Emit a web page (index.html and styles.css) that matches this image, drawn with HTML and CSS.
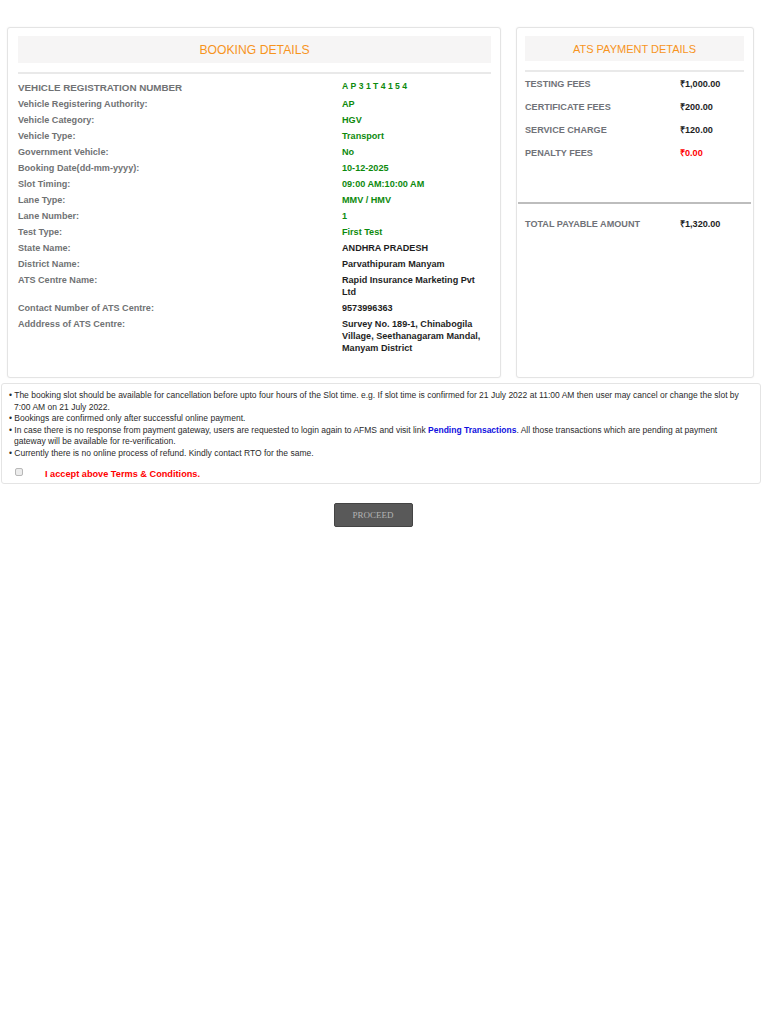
FILE: index.html
```html
<!DOCTYPE html>
<html>
<head>
<meta charset="utf-8">
<link rel="stylesheet" href="styles.css">
</head>
<body>
<div class="page">
  <div class="panels">
    <div class="panel booking">
      <div class="panel-head head-lg">BOOKING DETAILS</div>
      <div class="sep"></div>
      <div class="rows">
        <div class="row first"><div class="lbl lbl-caps">VEHICLE REGISTRATION NUMBER</div><div class="val green spaced">AP31T4154</div></div>
        <div class="row"><div class="lbl">Vehicle Registering Authority:</div><div class="val green">AP</div></div>
        <div class="row"><div class="lbl">Vehicle Category:</div><div class="val green">HGV</div></div>
        <div class="row"><div class="lbl">Vehicle Type:</div><div class="val green">Transport</div></div>
        <div class="row"><div class="lbl">Government Vehicle:</div><div class="val green">No</div></div>
        <div class="row"><div class="lbl">Booking Date(dd-mm-yyyy):</div><div class="val green">10-12-2025</div></div>
        <div class="row"><div class="lbl">Slot Timing:</div><div class="val green">09:00 AM:10:00 AM</div></div>
        <div class="row"><div class="lbl">Lane Type:</div><div class="val green">MMV / HMV</div></div>
        <div class="row"><div class="lbl">Lane Number:</div><div class="val green">1</div></div>
        <div class="row"><div class="lbl">Test Type:</div><div class="val green">First Test</div></div>
        <div class="row"><div class="lbl">State Name:</div><div class="val dark">ANDHRA PRADESH</div></div>
        <div class="row"><div class="lbl">District Name:</div><div class="val dark">Parvathipuram Manyam</div></div>
        <div class="row"><div class="lbl">ATS Centre Name:</div><div class="val dark">Rapid Insurance Marketing Pvt Ltd</div></div>
        <div class="row"><div class="lbl">Contact Number of ATS Centre:</div><div class="val dark">9573996363</div></div>
        <div class="row"><div class="lbl">Adddress of ATS Centre:</div><div class="val dark">Survey No. 189-1, Chinabogila Village, Seethanagaram Mandal, Manyam District</div></div>
      </div>
    </div>
    <div class="panel payment">
      <div class="panel-head head-sm">ATS PAYMENT DETAILS</div>
      <div class="sep sep-pay"></div>
      <div class="fees">
        <div class="fee"><div class="fee-lbl">TESTING FEES</div><div class="fee-val">₹1,000.00</div></div>
        <div class="fee"><div class="fee-lbl">CERTIFICATE FEES</div><div class="fee-val">₹200.00</div></div>
        <div class="fee"><div class="fee-lbl">SERVICE CHARGE</div><div class="fee-val">₹120.00</div></div>
        <div class="fee"><div class="fee-lbl">PENALTY FEES</div><div class="fee-val red">₹0.00</div></div>
      </div>
      <div class="total-sep"></div>
      <div class="fee total"><div class="fee-lbl">TOTAL PAYABLE AMOUNT</div><div class="fee-val">₹1,320.00</div></div>
    </div>
  </div>
  <div class="notes">
    <div class="note">• The booking slot should be available for cancellation before upto four hours of the Slot time. e.g. If slot time is confirmed for 21 July 2022 at 11:00 AM then user may cancel or change the slot by 7:00 AM on 21 July 2022.</div>
    <div class="note">• Bookings are confirmed only after successful online payment.</div>
    <div class="note">• In case there is no response from payment gateway, users are requested to login again to AFMS and visit link <span class="link">Pending Transactions</span>. All those transactions which are pending at payment gateway will be available for re-verification.</div>
    <div class="note">• Currently there is no online process of refund. Kindly contact RTO for the same.</div>
    <label class="accept"><input type="checkbox" class="chk"><span class="accept-text">I accept above Terms &amp; Conditions.</span></label>
  </div>
  <div class="actions"><button class="proceed">PROCEED</button></div>
</div>
</body>
</html>
```

FILE: styles.css
```css
html, body {
  margin: 0;
  padding: 0;
  background: #fff;
}
body {
  font-family: "Liberation Sans", Arial, sans-serif;
}
.page {
  padding-top: 27px;
}
.panels {
  display: flex;
  align-items: stretch;
  margin-left: 7px;
  gap: 15px;
}
.panel {
  border: 1px solid #e4e4e4;
  border-radius: 3px;
  box-shadow: 0 0 2px rgba(0,0,0,0.06);
  box-sizing: border-box;
  background: #fff;
}
.booking {
  width: 494px;
  height: 351px;
  padding: 8px 9px 0 10px;
}
.payment {
  width: 238px;
  padding: 8px 9px 0 8px;
}
.panel-head {
  background: #f6f5f5;
  color: #f7941d;
  text-align: center;
}
.head-lg {
  height: 27px;
  line-height: 29px;
  font-size: 12.2px;
}
.head-sm {
  height: 25px;
  line-height: 26px;
  font-size: 11px;
}
.sep {
  height: 2px;
  background: #e9e9e9;
  margin-top: 9px;
}
.sep-pay {
  margin-top: 9px;
}
.rows {
  padding-top: 4px;
}
.row {
  display: flex;
}
.lbl {
  width: 324px;
  flex: none;
  color: #707274;
  font-weight: bold;
  font-size: 9.1px;
  line-height: 12px;
  padding: 2px 0;
}
.lbl-caps {
  font-size: 9.8px;
  padding-top: 4px;
  padding-bottom: 2px;
}
.val {
  width: 148px;
  font-weight: bold;
  font-size: 9.1px;
  line-height: 12px;
  padding: 2px 0;
}
.spaced {
  letter-spacing: 2.4px;
  font-size: 8.6px;
}
.green { color: #0d8a0d; }
.dark { color: #1e1e1e; }
.fees {
  height: 130px;
}
.fee {
  display: flex;
  height: 23px;
  align-items: center;
}
.fee-lbl {
  width: 155px;
  color: #707278;
  font-weight: bold;
  font-size: 9.1px;
}
.fee-val {
  color: #1e1e1e;
  font-weight: bold;
  font-size: 9.1px;
}
.fee-val.red { color: #f00; }
.total-sep {
  height: 2px;
  background: #bdbdbd;
  margin: 0 -7px 0 -7px;
}
.total {
  margin-top: 8px;
}
.notes {
  margin: 5px 7px 0 1px;
  border: 1px solid #e4e4e4;
  border-radius: 3px;
  padding: 6px 18px 7px 7px;
  height: 101px;
  box-sizing: border-box;
}
.note {
  font-size: 8.5px;
  line-height: 11.6px;
  color: #2a2a2a;
  padding-left: 5px;
  text-indent: -5px;
}
.link {
  color: #1010e0;
  font-weight: bold;
}
.accept {
  display: flex;
  align-items: center;
  margin-top: 9px;
}
.chk {
  width: 8px;
  height: 8px;
  margin: 0 0 0 6px;
  appearance: none;
  border: 1px solid #b8b8b8;
  border-radius: 2px;
  background: #ececec;
  position: relative;
  top: -2px;
}
.accept-text {
  margin-left: 22px;
  color: #f00;
  font-weight: bold;
  font-size: 9.2px;
}
.actions {
  display: flex;
  justify-content: center;
  margin-top: 19px;
  padding-right: 22px;
}
.proceed {
  width: 79px;
  height: 24px;
  background: #595959;
  border: 1px solid #444;
  border-radius: 2px;
  color: #b4b4b4;
  font-family: "Liberation Serif", serif;
  font-size: 9px;
  padding: 0;
}
```
